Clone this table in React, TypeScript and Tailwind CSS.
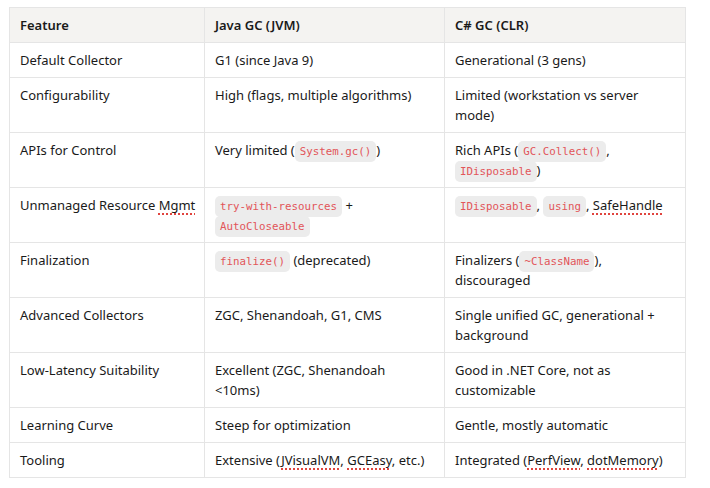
import type { ReactNode } from 'react'

function Code({ children }: { children: ReactNode }) {
  return (
    <code className="rounded-[5px] bg-[#ececec] px-[5px] py-[4px] font-['DejaVu_Sans_Mono',monospace] text-[10.8px] leading-none text-[#e25559]">
      {children}
    </code>
  )
}

function Spell({ children }: { children: ReactNode }) {
  return (
    <span className="underline decoration-dotted decoration-[#e0443e] decoration-2 underline-offset-[3px]">
      {children}
    </span>
  )
}

const rows: [ReactNode, ReactNode, ReactNode][] = [
  ['Default Collector', 'G1 (since Java 9)', 'Generational (3 gens)'],
  ['Configurability', 'High (flags, multiple algorithms)', 'Limited (workstation vs server mode)'],
  [
    'APIs for Control',
    <>Very limited (<Code>System.gc()</Code>)</>,
    <>Rich APIs (<Code>GC.Collect()</Code>, <Code>IDisposable</Code>)</>,
  ],
  [
    <span className="whitespace-nowrap">Unmanaged Resource <Spell>Mgmt</Spell></span>,
    <><Code>try-with-resources</Code> + <Code>AutoCloseable</Code></>,
    <><Code>IDisposable</Code>, <Code>using</Code>, <Spell>SafeHandle</Spell></>,
  ],
  [
    'Finalization',
    <><Code>finalize()</Code> (deprecated)</>,
    <>Finalizers (<Code>~ClassName</Code>), discouraged</>,
  ],
  ['Advanced Collectors', 'ZGC, Shenandoah, G1, CMS', 'Single unified GC, generational + background'],
  ['Low-Latency Suitability', <>Excellent (ZGC, Shenandoah<br />&lt;10ms)</>, 'Good in .NET Core, not as customizable'],
  ['Learning Curve', 'Steep for optimization', 'Gentle, mostly automatic'],
  [
    'Tooling',
    <>Extensive (<Spell>JVisualVM</Spell>, <Spell>GCEasy</Spell>, etc.)</>,
    <>Integrated (<Spell>PerfView</Spell>, <Spell>dotMemory</Spell>)</>,
  ],
]

export default function App() {
  return (
    <div className="h-[488px] w-[710px] bg-white pl-[9px] pt-[7px] font-['Noto_Sans',sans-serif] text-[13px] leading-[20px] text-[#1a1a1a]">
      <table className="w-[676px] table-fixed border-collapse">
        <colgroup>
          <col className="w-[195px]" />
          <col className="w-[240px]" />
          <col className="w-[241px]" />
        </colgroup>
        <thead>
          <tr className="bg-[#f4f3f1]">
            <th className="border border-[#e5e5e5] px-[10px] py-[7px] text-left font-semibold">Feature</th>
            <th className="border border-[#e5e5e5] px-[10px] py-[7px] text-left font-semibold">Java GC (JVM)</th>
            <th className="border border-[#e5e5e5] px-[10px] py-[7px] text-left font-semibold">C# GC (CLR)</th>
          </tr>
        </thead>
        <tbody>
          {rows.map((r, i) => (
            <tr key={i}>
              {r.map((c, j) => (
                <td key={j} className="border border-[#e5e5e5] px-[10px] py-[7px] align-top">
                  {c}
                </td>
              ))}
            </tr>
          ))}
        </tbody>
      </table>
    </div>
  )
}
